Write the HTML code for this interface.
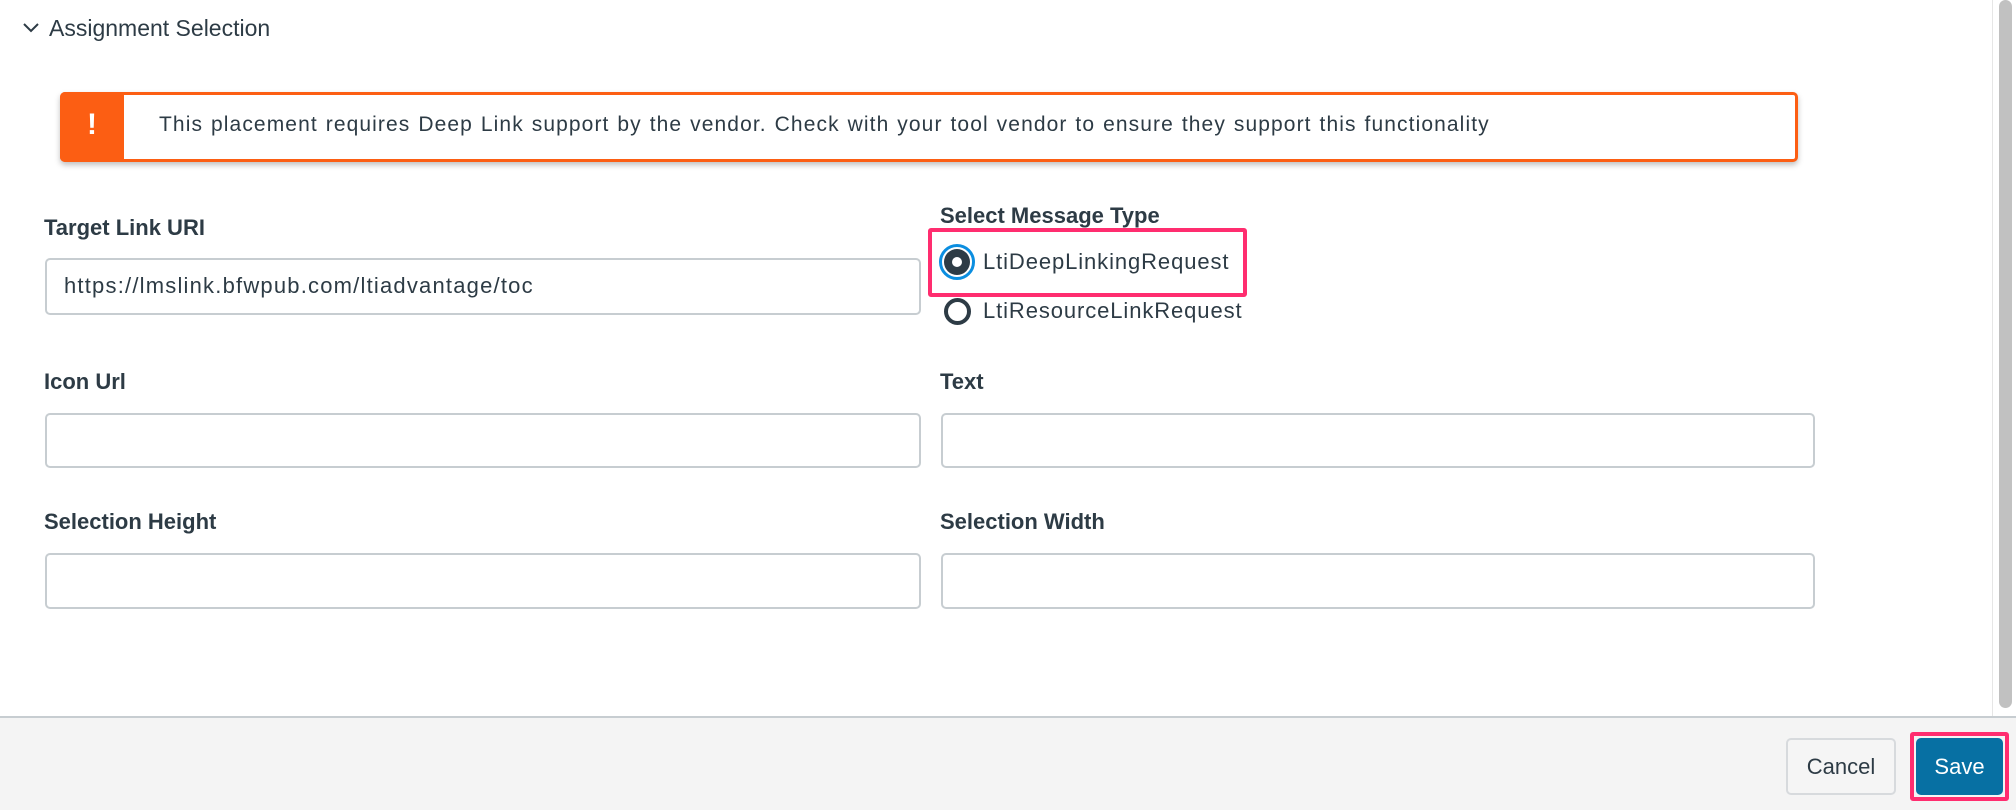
<!DOCTYPE html>
<html><head><style>
body{margin:0;width:2016px;height:810px;background:#fff;font-family:"Liberation Sans",sans-serif;color:#2d3b45;position:relative;overflow:hidden}
.a{position:absolute}
.lbl{font-weight:bold;font-size:22px;}
.inp{position:absolute;border:2px solid #c7cdd1;border-radius:5px;background:#fff;box-sizing:border-box}
</style></head><body>
<svg class="a" style="left:22px;top:21px" width="18" height="14"><path d="M2 3 L9 10 L16 3" stroke="#2d3b45" stroke-width="2" fill="none"/></svg>
<div class="a" style="left:49px;top:15px;font-size:23px">Assignment Selection</div>

<div class="a" style="left:60px;top:92px;width:1738px;height:70px;box-sizing:border-box;border:3px solid #fc5e13;border-radius:5px;box-shadow:0 3px 6px rgba(0,0,0,.25);background:#fff"></div>
<div class="a" style="left:60px;top:92px;width:64px;height:70px;background:#fc5e13;border-radius:5px 0 0 5px;color:#fff;font-weight:bold;font-size:30px;text-align:center;line-height:66px">!</div>
<div class="a" style="left:159px;top:113px;font-size:21px;letter-spacing:1.1px;word-spacing:1px">This placement requires Deep Link support by the vendor. Check with your tool vendor to ensure they support this functionality</div>

<div class="a lbl" style="left:44px;top:215px">Target Link URI</div>
<div class="inp" style="left:45px;top:258px;width:876px;height:57px"></div>
<div class="a" style="left:64px;top:273px;font-size:22px;letter-spacing:1.2px">https://lmslink.bfwpub.com/ltiadvantage/toc</div>

<div class="a lbl" style="left:940px;top:203px">Select Message Type</div>
<div class="a" style="left:928px;top:228px;width:319px;height:69px;box-sizing:border-box;border:4px solid #ff2d6f;border-radius:3px"></div>
<div class="a" style="left:939px;top:244px;width:36px;height:36px;border-radius:50%;border:3px solid #0b8ee0;box-sizing:border-box"></div>
<div class="a" style="left:944px;top:249px;width:26px;height:26px;border-radius:50%;background:#2d3b45"></div>
<div class="a" style="left:952px;top:257px;width:10px;height:10px;border-radius:50%;background:#fff"></div>
<div class="a" style="left:983px;top:249px;font-size:22px;letter-spacing:0.9px">LtiDeepLinkingRequest</div>
<div class="a" style="left:944px;top:298px;width:27px;height:27px;border-radius:50%;border:4px solid #2d3b45;box-sizing:border-box"></div>
<div class="a" style="left:983px;top:298px;font-size:22px;letter-spacing:0.9px">LtiResourceLinkRequest</div>

<div class="a lbl" style="left:44px;top:369px">Icon Url</div>
<div class="inp" style="left:45px;top:413px;width:876px;height:55px"></div>
<div class="a lbl" style="left:940px;top:369px">Text</div>
<div class="inp" style="left:941px;top:413px;width:874px;height:55px"></div>

<div class="a lbl" style="left:44px;top:509px">Selection Height</div>
<div class="inp" style="left:45px;top:553px;width:876px;height:56px"></div>
<div class="a lbl" style="left:940px;top:509px">Selection Width</div>
<div class="inp" style="left:941px;top:553px;width:874px;height:56px"></div>

<div class="a" style="left:1992px;top:0;width:1px;height:716px;background:#e6e6e6"></div>
<div class="a" style="left:1999px;top:0;width:13px;height:708px;background:#c1c1c1;border-radius:7px"></div>

<div class="a" style="left:0;top:716px;width:2016px;height:2px;background:#c7cdd1"></div>
<div class="a" style="left:0;top:718px;width:2016px;height:92px;background:#f4f4f4"></div>
<div class="a" style="left:1786px;top:738px;width:110px;height:57px;box-sizing:border-box;border:2px solid #d7dadd;border-radius:5px;background:#f5f5f5;font-size:22px;text-align:center;line-height:53px">Cancel</div>
<div class="a" style="left:1910px;top:732px;width:99px;height:69px;box-sizing:border-box;border:4px solid #ff2d6f;border-radius:3px"></div>
<div class="a" style="left:1916px;top:738px;width:87px;height:57px;background:#0770a3;border-radius:5px;color:#fff;font-size:22px;text-align:center;line-height:57px">Save</div>
</body></html>
